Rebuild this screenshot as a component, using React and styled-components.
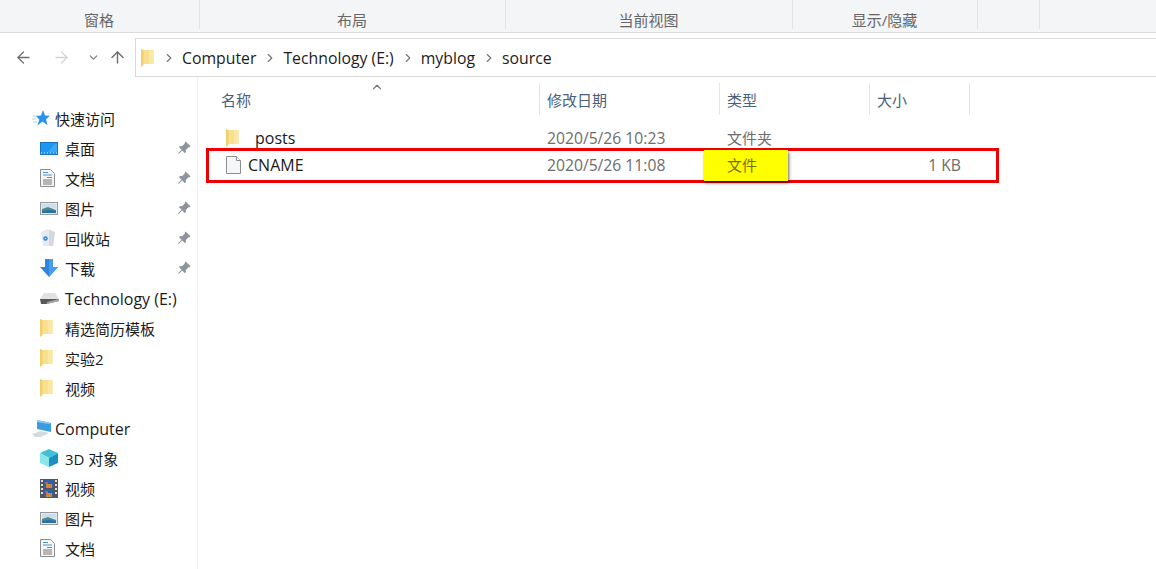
import styled, { createGlobalStyle } from "styled-components";
import { ArrowLeft, ArrowRight, ArrowUp, ChevronDown, ChevronRight, ChevronUp } from "lucide-react";
import { BsPinAngleFill } from "react-icons/bs";

const GlobalStyle = createGlobalStyle`
  html, body {
    margin: 0;
    padding: 0;
    background: #fff;
  }
  body {
    font-family: "Open Sans", "Noto Sans CJK SC", sans-serif;
    font-size: 15px;
    color: #1a1a1a;
  }
`;

const Page = styled.div`
  width: 1156px;
  height: 569px;
  overflow: hidden;
  display: flex;
  flex-direction: column;
`;

const Ribbon = styled.div`
  height: 32px;
  flex: none;
  display: grid;
  grid-template-columns: 200px 306px 287px 185px 62px 1fr;
  background: #f4f5f7;
  border-bottom: 1px solid #dcdcdc;
`;

const RibbonGroup = styled.div`
  height: 29px;
  padding: 9px 1px 0 0;
  box-sizing: border-box;
  display: flex;
  align-items: center;
  justify-content: center;
  font-size: 15px;
  color: #666;
  border-right: 1px solid ${(p) => (p.$last ? "transparent" : "#e2e3e5")};
`;

const NavBar = styled.div`
  flex: none;
  height: 39px;
  margin-top: 5px;
  display: flex;
`;

const NavButtons = styled.div`
  width: 135px;
  flex: none;
  padding-left: 14px;
  box-sizing: border-box;
  display: flex;
  align-items: center;
`;

const NavButton = styled.span`
  display: flex;
  width: ${(p) => p.$w}px;
  color: ${(p) => p.$color};
`;

const AddressBar = styled.div`
  flex: 1;
  display: flex;
  align-items: center;
  padding-left: 5px;
  border: 1px solid #d9d9d9;
  border-right: none;
  font-size: 15.8px;
  color: #1c1c1c;
`;

const Crumb = styled.span`
  display: flex;
  align-items: center;
`;

const CrumbArrow = styled(ChevronRight)`
  margin: 0 6px 0 ${(p) => (p.$first ? 8 : 7)}px;
  color: #777;
`;

const Body = styled.div`
  flex: 1;
  display: flex;
  min-height: 0;
`;

const Sidebar = styled.nav`
  width: 198px;
  flex: none;
  box-sizing: border-box;
  padding-top: 26px;
  border-right: 1px solid #f2f2f2;
`;

const TreeGroup = styled.div`
  margin-bottom: 10px;
`;

const TreeRow = styled.div`
  height: 30px;
  display: flex;
  align-items: center;
  padding-left: ${(p) => (p.$top ? 32 : 40)}px;
  padding-right: 6px;
  white-space: nowrap;
`;

const TreeIcon = styled.span`
  width: ${(p) => (p.$top ? 23 : 25)}px;
  flex: none;
  display: flex;
  align-items: center;
`;

const TreeLabel = styled.span`
  flex: 1;
  font-size: ${(p) => (p.$latin ? 16 : 15)}px;
  padding-top: ${(p) => (p.$latin ? 2 : 0)}px;
`;

const Pin = styled(BsPinAngleFill)`
  color: #8d949b;
  font-size: 14px;
`;

const Main = styled.main`
  flex: 1;
  padding-left: 15px;
`;

const columns = "327px 180px 150px 100px";

const HeaderRow = styled.div`
  position: relative;
  margin-top: 6px;
  height: 34px;
  padding-bottom: 2px;
  box-sizing: border-box;
  display: grid;
  grid-template-columns: ${columns};
`;

const HeaderCell = styled.div`
  display: flex;
  align-items: center;
  padding-left: ${(p) => (p.$name ? 8 : 7)}px;
  font-size: 15px;
  color: #4c607a;
  border-right: 1px solid #e5e5e5;
`;

const SortMark = styled(ChevronUp)`
  position: absolute;
  left: 157px;
  top: -3px;
  color: #777;
`;

const FileList = styled.div`
  padding-top: 8px;
`;

const FileRow = styled.div`
  position: relative;
  height: 27px;
  padding-bottom: 2px;
  box-sizing: border-box;
  display: grid;
  grid-template-columns: ${columns};
  align-items: center;
`;

const NameCell = styled.div`
  position: relative;
  display: flex;
  align-items: center;
  padding-left: 13px;
  font-size: 16px;
  color: #1a1a1a;
`;

const NameIcon = styled.span`
  display: flex;
  width: ${(p) => p.$w}px;
  flex: none;
`;

const Cell = styled.div`
  position: relative;
  z-index: 2;
  padding-left: 7px;
  font-size: ${(p) => (p.$cjk ? 15 : 15.7)}px;
  color: ${(p) => p.$color || "#6d6d6d"};
`;

const SizeCell = styled(Cell)`
  text-align: right;
  padding-right: 9px;
`;

const RedFrame = styled.div`
  position: absolute;
  left: -7px;
  top: -4px;
  width: 793px;
  height: 35px;
  box-sizing: border-box;
  border: 3px solid #ee0000;
  pointer-events: none;
`;

const Highlight = styled.div`
  position: absolute;
  z-index: 1;
  left: 491px;
  top: -2px;
  width: 84px;
  height: 31px;
  background: #ffff00;
  box-shadow: 1px 2px 3px rgba(0, 0, 0, 0.6);
`;

const Folder = () => (
  <svg width="13" height="20" viewBox="0 0 13 20">
    <path d="M0 1l3 1h9.500v14H3L0 18z" fill="#f9df90" />
    <path d="M0 1l2.500 1.500V17L0 19z" fill="#f2cf6c" />
    <path d="M8 2h4.500v14H8z" fill="#fbe7a6" />
  </svg>
);

const Star = () => (
  <svg width="18" height="17" viewBox="0 0 18 17">
    <path d="M11 0l2 5.500 5 .3-4 3.500 1.400 5.700L10.500 11.500 5.500 15.500l1.800-6L4 6l5-.5z" fill="#2a92e8" />
    <path d="M1 6h4M0 9h4M1 12h4" stroke="#a9d5f6" strokeWidth="1" />
  </svg>
);

const Desktop = () => (
  <svg width="18" height="13" viewBox="0 0 18 13">
    <rect x=".5" y=".5" width="17" height="12" fill="#1c97f3" stroke="#1a72bd" />
    <path d="M8 10l7-8.500h2V10z" fill="#3ba8f6" />
    <path d="M1 11h16" stroke="#e8f2fa" strokeWidth="1" strokeDasharray="1 2" />
  </svg>
);

const Doc = () => (
  <svg width="15" height="18" viewBox="0 0 15 18">
    <path d="M.5.500h10l4 4v13H.5z" fill="#f6f6f6" stroke="#8d8d8d" />
    <path d="M3 3.500h5M3 6h9M7 8.500h5" stroke="#4b95cf" strokeWidth="1" />
    <path d="M3 11h9M3 13h9M3 15h9" stroke="#777" strokeWidth="1" />
  </svg>
);

const Picture = () => (
  <svg width="18" height="13" viewBox="0 0 18 13">
    <rect x=".5" y=".5" width="17" height="12" fill="#dfeaf0" stroke="#9a9a9a" />
    <path d="M2 2h14v4L9 5 2 7z" fill="#c9dfee" />
    <path d="M2 7l6-2 8 3v3H2z" fill="#4d8a8a" />
    <path d="M2 9l7-1 7 1v2H2z" fill="#2a6fa8" />
  </svg>
);

const Bin = () => (
  <svg width="16" height="18" viewBox="0 0 16 18">
    <path d="M1 3l6-3 8 3-2 14H3z" fill="#e6eaee" />
    <path d="M9 1l6 2-2 14H9z" fill="#d2d8dd" />
    <circle cx="5.500" cy="9.500" r="2.200" fill="#2a86d6" />
    <circle cx="5.500" cy="9.500" r=".8" fill="#e6eaee" />
  </svg>
);

const Download = () => (
  <svg width="18" height="18" viewBox="0 0 18 18">
    <path d="M5 0h8v8h5l-9 10L0 8h5z" fill="#2f86de" />
    <path d="M9 0h4v8h5l-9 10z" fill="#4a9ce9" />
  </svg>
);

const Drive = () => (
  <svg width="19" height="11" viewBox="0 0 19 11">
    <path d="M4 0h11l4 6H0z" fill="#e2e2e2" />
    <path d="M0 6h19v2L6 11H1z" fill="#5a5a5a" />
    <path d="M7 9l12-3v2L7 11z" fill="#a5a5a5" />
  </svg>
);

const ComputerIcon = () => (
  <svg width="20" height="17" viewBox="0 0 20 17">
    <path d="M5 0l14 3v9L5 9z" fill="#3a9be0" />
    <path d="M5 0l14 3-2 1L5 2z" fill="#8ccbf2" />
    <path d="M0 14l9-3 8 2-8 4H3z" fill="#d5dadd" />
  </svg>
);

const Cube = () => (
  <svg width="18" height="18" viewBox="0 0 18 18">
    <path d="M9 0l9 4-9 5-9-5z" fill="#3fc2d8" />
    <path d="M0 4l9 5v9l-9-4z" fill="#8ae6ea" />
    <path d="M18 4L9 9v9l9-4z" fill="#1b8fc2" />
  </svg>
);

const Film = () => (
  <svg width="18" height="19" viewBox="0 0 18 19">
    <rect width="18" height="19" fill="#555" />
    <path d="M1 1h2v2H1zM1 5h2v2H1zM1 9h2v2H1zM1 13h2v2H1zM15 1h2v2h-2zM15 5h2v2h-2zM15 9h2v2h-2zM15 13h2v2h-2z" fill="#ddd" />
    <rect x="4" y="1" width="10" height="8" fill="#2c5fa8" />
    <rect x="4" y="10" width="10" height="8" fill="#2c5fa8" />
    <path d="M6 5h6v4H6zM6 14h6v4H6z" fill="#c9883a" />
    <path d="M5 3h3v2H5zM5 12h3v2H5z" fill="#d6564e" />
  </svg>
);

const FileIcon = () => (
  <svg width="15" height="18" viewBox="0 0 15 18">
    <path d="M.5.500h10l4 4v13H.5z" fill="#f5f6f8" stroke="#8c8c8c" />
    <path d="M10.500.500v4h4" fill="#fff" stroke="#8c8c8c" />
  </svg>
);

const quickAccess = [
  { label: "桌面", icon: <Desktop />, pin: true },
  { label: "文档", icon: <Doc />, pin: true },
  { label: "图片", icon: <Picture />, pin: true },
  { label: "回收站", icon: <Bin />, pin: true },
  { label: "下载", icon: <Download />, pin: true },
  { label: "Technology (E:)", icon: <Drive />, latin: true },
  { label: "精选简历模板", icon: <Folder /> },
  { label: "实验2", icon: <Folder /> },
  { label: "视频", icon: <Folder /> },
];

const computer = [
  { label: "3D 对象", icon: <Cube /> },
  { label: "视频", icon: <Film /> },
  { label: "图片", icon: <Picture /> },
  { label: "文档", icon: <Doc /> },
];

const Tree = ({ title, icon, items, latin }) => (
  <TreeGroup>
    <TreeRow $top>
      <TreeIcon $top>{icon}</TreeIcon>
      <TreeLabel $latin={latin}>{title}</TreeLabel>
    </TreeRow>
    {items.map((item) => (
      <TreeRow key={item.label}>
        <TreeIcon>{item.icon}</TreeIcon>
        <TreeLabel $latin={item.latin}>{item.label}</TreeLabel>
        {item.pin && <Pin />}
      </TreeRow>
    ))}
  </TreeGroup>
);

export default function App() {
  return (
    <Page>
      <GlobalStyle />
      <Ribbon>
        <RibbonGroup>窗格</RibbonGroup>
        <RibbonGroup>布局</RibbonGroup>
        <RibbonGroup>当前视图</RibbonGroup>
        <RibbonGroup>显示/隐藏</RibbonGroup>
        <RibbonGroup />
        <RibbonGroup $last />
      </Ribbon>

      <NavBar>
        <NavButtons>
          <NavButton $w={38} $color="#6f6f6f"><ArrowLeft size={19} strokeWidth={1.6} /></NavButton>
          <NavButton $w={35} $color="#d4d4d4"><ArrowRight size={19} strokeWidth={1.6} /></NavButton>
          <NavButton $w={21} $color="#7a7a7a"><ChevronDown size={13} strokeWidth={2.2} /></NavButton>
          <NavButton $w={19} $color="#6f6f6f"><ArrowUp size={19} strokeWidth={1.8} /></NavButton>
        </NavButtons>
        <AddressBar>
          <Crumb><Folder /></Crumb>
          <CrumbArrow size={14} $first />
          <Crumb>Computer</Crumb>
          <CrumbArrow size={14} />
          <Crumb>Technology (E:)</Crumb>
          <CrumbArrow size={14} />
          <Crumb>myblog</Crumb>
          <CrumbArrow size={14} />
          <Crumb>source</Crumb>
        </AddressBar>
      </NavBar>

      <Body>
        <Sidebar>
          <Tree title="快速访问" icon={<Star />} items={quickAccess} />
          <Tree title="Computer" icon={<ComputerIcon />} items={computer} latin />
        </Sidebar>

        <Main>
          <HeaderRow>
            <SortMark size={14} />
            <HeaderCell $name>名称</HeaderCell>
            <HeaderCell>修改日期</HeaderCell>
            <HeaderCell>类型</HeaderCell>
            <HeaderCell>大小</HeaderCell>
          </HeaderRow>

          <FileList>
            <FileRow>
              <NameCell>
                <NameIcon $w={29}><Folder /></NameIcon>
                posts
              </NameCell>
              <Cell>2020/5/26 10:23</Cell>
              <Cell $cjk>文件夹</Cell>
              <SizeCell />
            </FileRow>
            <FileRow>
              <Highlight />
              <NameCell>
                <NameIcon $w={22}><FileIcon /></NameIcon>
                CNAME
              </NameCell>
              <Cell>2020/5/26 11:08</Cell>
              <Cell $cjk $color="#7a6f00">文件</Cell>
              <SizeCell>1 KB</SizeCell>
              <RedFrame />
            </FileRow>
          </FileList>
        </Main>
      </Body>
    </Page>
  );
}
